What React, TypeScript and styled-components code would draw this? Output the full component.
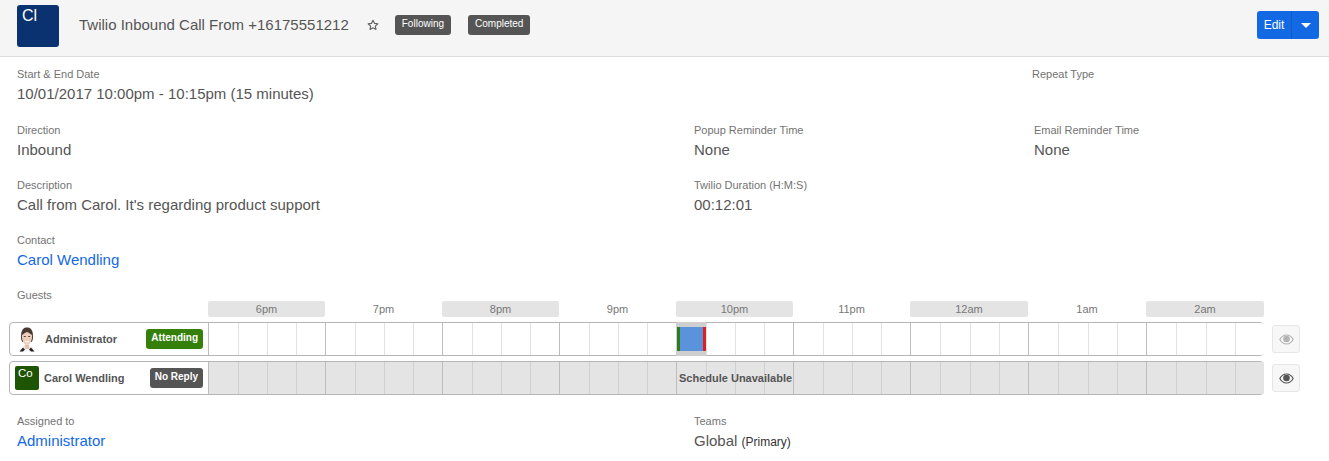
import React from "react";
import styled, { createGlobalStyle } from "styled-components";

const Global = createGlobalStyle`
  html, body { margin: 0; padding: 0; background: #fff; }
  body { font-family: "Liberation Sans", Arial, sans-serif; color: #555; }
`;

const Page = styled.div`
  width: 1329px;
  height: 461px;
  overflow: hidden;
`;

const Header = styled.header`
  height: 56px;
  background: #f5f5f5;
  border-bottom: 1px solid #ddd;
  display: flex;
  align-items: flex-start;
  padding: 0 10px 0 17px;
`;

const RecordIcon = styled.div`
  width: 42px;
  height: 42px;
  margin-top: 5px;
  border-radius: 3px;
  background: #0b3270;
  color: #fff;
  font-size: 16px;
  line-height: 21px;
  padding-left: 5px;
  box-sizing: border-box;
`;

const Title = styled.h1`
  margin: 15px 0 0 20px;
  font-size: 15px;
  font-weight: 400;
  line-height: 20px;
  color: #555;
`;

const StarButton = styled.span`
  display: flex;
  margin: 19px 0 0 18px;
  color: #5f5f5f;
`;

const Pill = styled.span<{ $gap: number }>`
  margin: 15px 0 0 ${(p) => p.$gap}px;
  height: 20px;
  padding: 0 7px;
  border-radius: 3px;
  background: #555;
  color: #fff;
  font-size: 10px;
  line-height: 17px;
`;

const EditGroup = styled.div`
  margin: 11px 0 0 auto;
  height: 28px;
  display: flex;
  border-radius: 3px;
  background: #1369e4;
  color: #fff;
  font-size: 12px;
  line-height: 28px;
`;

const EditLabel = styled.span`
  width: 34px;
  text-align: center;
  border-right: 1px solid #0f5cc9;
`;

const EditCaret = styled.span`
  width: 27px;
  display: flex;
  align-items: center;
  justify-content: center;
  &::after {
    content: "";
    border-top: 5px solid #fff;
    border-left: 5px solid transparent;
    border-right: 5px solid transparent;
  }
`;

const Body = styled.main`
  padding-top: 11px;
`;

const FieldRow = styled.div<{ $h: number; $cols?: string; $top?: number }>`
  display: grid;
  grid-template-columns: ${(p) => p.$cols || "677px 340px 1fr"};
  padding-left: 17px;
  height: ${(p) => p.$h}px;
  margin-top: ${(p) => p.$top || 0}px;
`;

const Field = styled.div``;

const Label = styled.div`
  font-size: 11px;
  line-height: 13px;
  color: #737373;
`;

const Value = styled.div`
  font-size: 15px;
  line-height: 20px;
  margin-top: 3px;
  color: #555;
`;

const LinkValue = styled(Value)`
  color: #1369e4;
`;

const Small = styled.span`
  font-size: 12px;
  color: #333;
`;

const GuestsLabel = styled(Label)`
  padding-left: 17px;
`;

const HourRow = styled.div`
  display: grid;
  grid-template-columns: repeat(6, 117px) repeat(3, 118px);
  margin: -1px 0 0 208px;
  width: 1056px;
`;

const Hour = styled.div<{ $shade: boolean }>`
  height: 16px;
  font-size: 11px;
  line-height: 16px;
  text-align: center;
  border-radius: 2px;
  color: #777;
  background: ${(p) => (p.$shade ? "#e4e4e4" : "transparent")};
`;

const GuestLine = styled.div<{ $top: number }>`
  display: flex;
  margin: ${(p) => p.$top}px 0 0 9px;
  align-items: center;
`;

const GuestBox = styled.div`
  width: 1255px;
  height: 34px;
  box-sizing: border-box;
  border: 1px solid #b5b5b5;
  border-radius: 4px;
  display: flex;
`;

const GuestInfo = styled.div`
  width: 198px;
  flex: none;
  display: flex;
  align-items: center;
  padding: 0 5px;
  box-sizing: border-box;
`;

const Initials = styled.div`
  width: 24px;
  height: 24px;
  flex: none;
  border-radius: 2px;
  background: #1e5505;
  color: #fff;
  font-size: 11.5px;
  line-height: 15px;
  padding-left: 3px;
  box-sizing: border-box;
`;

const GuestName = styled.span<{ $ml: number }>`
  margin-left: ${(p) => p.$ml}px;
  font-size: 11px;
  font-weight: 700;
  color: #555;
`;

const Status = styled.span<{ $bg: string }>`
  margin-left: auto;
  height: 20px;
  padding: 0 5px;
  border-radius: 3px;
  background: ${(p) => p.$bg};
  color: #fff;
  font-size: 10px;
  font-weight: 700;
  line-height: 18px;
`;

const Track = styled.div<{ $off?: boolean }>`
  position: relative;
  flex: 1;
  display: grid;
  grid-template-columns: repeat(6, 30px 29px 29px 29px) repeat(3, 30px 30px 29px 29px);
  background: ${(p) => (p.$off ? "#e4e4e4" : "#fff")};
  border-radius: 0 3px 3px 0;
`;

const Tick = styled.div<{ $major: boolean; $off?: boolean }>`
  border-left: 1px solid
    ${(p) => (p.$major ? "#bdbdbd" : p.$off ? "#d0d0d0" : "#e2e2e2")};
`;

const MeetingBand = styled.div`
  position: absolute;
  left: 468px;
  top: -1px;
  bottom: -1px;
  width: 30px;
  background: #cfcfcf;
`;

const MeetingBlock = styled.div`
  position: absolute;
  left: 1px;
  top: 5px;
  height: 24px;
  width: 29px;
  box-sizing: border-box;
  background: #5a93dc;
  border-left: 3px solid #2f7d1a;
  border-right: 3px solid #e01f1f;
`;

const Unavailable = styled.div`
  position: absolute;
  left: 471px;
  top: 0;
  bottom: 0;
  line-height: 32px;
  font-size: 11px;
  font-weight: 700;
  color: #555;
  white-space: nowrap;
`;

const EyeButton = styled.div<{ $dim?: boolean }>`
  margin-left: 8px;
  width: 28px;
  height: 28px;
  box-sizing: border-box;
  border: 1px solid #e6e6e6;
  border-radius: 3px;
  background: #f7f7f7;
  display: flex;
  align-items: center;
  justify-content: center;
  color: ${(p) => (p.$dim ? "#b3b3b3" : "#555")};
`;

const Eye = () => (
  <svg width="15" height="11" viewBox="0 0 15 11" aria-hidden="true">
    <path
      fill="currentColor"
      fillRule="evenodd"
      d="M7.5 0.5C4.2 0.5 1.5 2.6 0.2 5.5 1.5 8.4 4.2 10.5 7.5 10.5S13.5 8.4 14.8 5.5C13.5 2.6 10.8 0.5 7.5 0.5ZM7.5 1.5C5 1.5 2.8 3.1 1.5 5.5 2.8 7.9 5 9.5 7.5 9.5S12.2 7.9 13.5 5.5C12.2 3.1 10 1.5 7.5 1.5Z"
    />
    <circle cx="7.5" cy="5" r="3.3" fill="currentColor" />
  </svg>
);

const Star = () => (
  <svg width="12" height="12" viewBox="0 0 24 24" fill="none" stroke="currentColor" strokeWidth="2.2" aria-hidden="true">
    <path d="M12 2.5l2.9 6.2 6.8.8-5 4.6 1.3 6.700-6-3.300-6 3.300 1.300-6.700-5-4.600 6.800-.8z" strokeLinejoin="round" />
  </svg>
);

const Portrait = () => (
  <svg width="24" height="26" viewBox="0 0 24 26" aria-hidden="true">
    <defs>
      <filter id="soft" x="-10%" y="-10%" width="120%" height="120%">
        <feGaussianBlur stdDeviation="0.4" />
      </filter>
    </defs>
    <g filter="url(#soft)">
      <path d="M3 25.500c1-3 4-4.500 6-5.500h6c2 1 5 2.500 6 5.500z" fill="#f6f6f6" />
      <path d="M4.500 25.500l3.500-4 2 2-2 2zM19.500 25.500l-3.500-4-2 2 2 2z" fill="#222" />
      <path d="M6 11C6 4 8 1.500 12 1.500s6 2.500 6 9.500c0 2-.5 4-1.500 5h-9C6.500 15 6 13 6 11z" fill="#4a3a30" />
      <path d="M7 9c1.500-.5 3.500-3 5-3s3.500 2.500 5 3c.5 5-2 10-5 10S6.500 14 7 9z" fill="#edcdbc" />
      <path d="M9.500 19h5l-.5 4h-4z" fill="#e6c2ae" />
      <path d="M9.500 14.500c1.500 1 3.500 1 5 0-.5 1.500-1.500 2-2.500 2s-2-.5-2.500-2z" fill="#fff" />
      <path d="M8.800 10.500h2M13.200 10.500h2" stroke="#5a4438" strokeWidth="1" />
    </g>
  </svg>
);

const hours = ["6pm", "7pm", "8pm", "9pm", "10pm", "11pm", "12am", "1am", "2am"];
const ticks = Array.from({ length: 36 }, (_, i) => i);

export default function App() {
  return (
    <Page>
      <Global />
      <Header>
        <RecordIcon>Cl</RecordIcon>
        <Title>Twilio Inbound Call From +16175551212</Title>
        <StarButton><Star /></StarButton>
        <Pill $gap={16}>Following</Pill>
        <Pill $gap={17}>Completed</Pill>
        <EditGroup>
          <EditLabel>Edit</EditLabel>
          <EditCaret />
        </EditGroup>
      </Header>
      <Body>
        <FieldRow $h={56} $cols="1015px 1fr">
          <Field><Label>Start &amp; End Date</Label><Value>10/01/2017 10:00pm - 10:15pm (15 minutes)</Value></Field>
          <Field><Label>Repeat Type</Label></Field>
        </FieldRow>
        <FieldRow $h={55}>
          <Field><Label>Direction</Label><Value>Inbound</Value></Field>
          <Field><Label>Popup Reminder Time</Label><Value>None</Value></Field>
          <Field><Label>Email Reminder Time</Label><Value>None</Value></Field>
        </FieldRow>
        <FieldRow $h={55}>
          <Field><Label>Description</Label><Value>Call from Carol. It's regarding product support</Value></Field>
          <Field><Label>Twilio Duration (H:M:S)</Label><Value>00:12:01</Value></Field>
        </FieldRow>
        <FieldRow $h={55}>
          <Field><Label>Contact</Label><LinkValue>Carol Wendling</LinkValue></Field>
        </FieldRow>
        <GuestsLabel>Guests</GuestsLabel>
        <HourRow>
          {hours.map((h, i) => (
            <Hour key={h} $shade={i % 2 === 0}>{h}</Hour>
          ))}
        </HourRow>
        <GuestLine $top={5}>
          <GuestBox>
            <GuestInfo>
              <Portrait />
              <GuestName $ml={6}>Administrator</GuestName>
              <Status $bg="#35800b">Attending</Status>
            </GuestInfo>
            <Track>
              {ticks.map((i) => <Tick key={i} $major={i % 4 === 0} />)}
              <MeetingBand><MeetingBlock /></MeetingBand>
            </Track>
          </GuestBox>
          <EyeButton $dim><Eye /></EyeButton>
        </GuestLine>
        <GuestLine $top={5}>
          <GuestBox>
            <GuestInfo>
              <Initials>Co</Initials>
              <GuestName $ml={5}>Carol Wendling</GuestName>
              <Status $bg="#555">No Reply</Status>
            </GuestInfo>
            <Track $off>
              {ticks.map((i) => <Tick key={i} $major={i % 4 === 0} $off />)}
              <Unavailable>Schedule Unavailable</Unavailable>
            </Track>
          </GuestBox>
          <EyeButton><Eye /></EyeButton>
        </GuestLine>
        <FieldRow $h={50} $top={20}>
          <Field><Label>Assigned to</Label><LinkValue>Administrator</LinkValue></Field>
          <Field><Label>Teams</Label><Value>Global <Small>(Primary)</Small></Value></Field>
        </FieldRow>
      </Body>
    </Page>
  );
}
